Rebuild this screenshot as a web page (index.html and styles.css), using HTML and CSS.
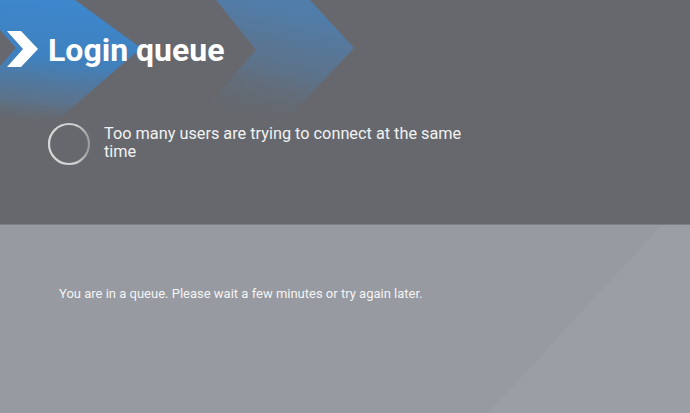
FILE: index.html
```html
<!DOCTYPE html>
<html lang="en">
<head>
  <meta charset="UTF-8" />
  <meta name="viewport" content="width=device-width, initial-scale=1.0" />
  <title>Login queue</title>
  <link rel="stylesheet" href="styles.css">
</head>
<body>
  <div class="top-panel">
    <svg class="backdrop" width="690" height="225" viewBox="0 0 690 225">
      <defs>
        <linearGradient id="blueFade" x1="0.2" y1="0" x2="0.1" y2="1">
          <stop offset="0" stop-color="#3d87cc" />
          <stop offset="0.45" stop-color="#3f81bf" />
          <stop offset="0.8" stop-color="#557a9e" stop-opacity="0.6" />
          <stop offset="1" stop-color="#66686d" stop-opacity="0" />
        </linearGradient>
        <linearGradient id="softFade" x1="0.3" y1="0" x2="0" y2="1">
          <stop offset="0" stop-color="#4b82b8" stop-opacity="0.8" />
          <stop offset="0.5" stop-color="#58789a" stop-opacity="0.65" />
          <stop offset="1" stop-color="#66686d" stop-opacity="0" />
        </linearGradient>
      </defs>
      <polygon points="0,0 75,0 141,48 52,125 0,125 0,66 16,48 0,30" fill="url(#blueFade)" />
      <polygon points="216,0 310,0 354,48 292,114 200,114 256,50" fill="url(#softFade)" />
    </svg>

    <div class="title-row">
      <svg class="title-arrow" width="32" height="38" viewBox="0 0 32 38">
        <polygon points="0,0 14,0 31,18 14,36 0,36 16,18" fill="#fff" />
      </svg>
      <h1>Login queue</h1>
    </div>

    <div class="status-row">
      <svg class="spinner" width="44" height="44" viewBox="0 0 44 44">
        <defs>
          <linearGradient id="ringShade" x1="0" y1="0" x2="1" y2="0">
            <stop offset="0" stop-color="#d6d6d6" />
            <stop offset="0.7" stop-color="#cfcfcf" />
            <stop offset="1" stop-color="#9a9a9a" />
          </linearGradient>
        </defs>
        <circle cx="22" cy="22" r="20" fill="none" stroke="url(#ringShade)" stroke-width="2.2" />
      </svg>
      <p class="status-text">Too many users are trying to connect at the same time</p>
    </div>
  </div>

  <div class="bottom-panel">
    <svg class="backdrop" width="690" height="188" viewBox="0 0 690 188">
      <polygon points="662,0 690,0 690,188 488,188" fill="#9c9ea5" />
    </svg>
    <p class="queue-note">You are in a queue. Please wait a few minutes or try again later.</p>
  </div>
</body>
</html>
```

FILE: styles.css
```css
body {
  margin: 0;
  width: 690px;
  height: 413px;
  overflow: hidden;
  font-family: Roboto, "Liberation Sans", sans-serif;
  color: #fff;
}

.top-panel {
  position: relative;
  height: 225px;
  background-color: #66686d;
  border-bottom: 1px solid #7c7f85;
  box-sizing: border-box;
  padding: 31px 0 0 7px;
}

.bottom-panel {
  position: relative;
  height: 188px;
  background-color: #979aa1;
  padding: 0 0 0 59px;
  box-sizing: border-box;
}

.backdrop {
  position: absolute;
  left: 0;
  top: 0;
}

.title-row {
  position: relative;
  display: flex;
  align-items: center;
  gap: 9px;
}

.title-arrow {
  display: block;
}

h1 {
  margin: 0;
  font-size: 32px;
  font-weight: 700;
  line-height: 38px;
}

.status-row {
  position: relative;
  display: flex;
  align-items: flex-start;
  gap: 13px;
  margin: 52px 0 0 40px;
}

.spinner {
  display: block;
  margin-top: 1px;
}

.status-text {
  margin: 4px 0 0;
  width: 372px;
  font-size: 16.3px;
  line-height: 18px;
  color: #f2f2f2;
}

.queue-note {
  position: relative;
  margin: 0;
  padding-top: 60px;
  font-size: 13px;
  line-height: 17px;
  color: #f4f4f4;
}
```
